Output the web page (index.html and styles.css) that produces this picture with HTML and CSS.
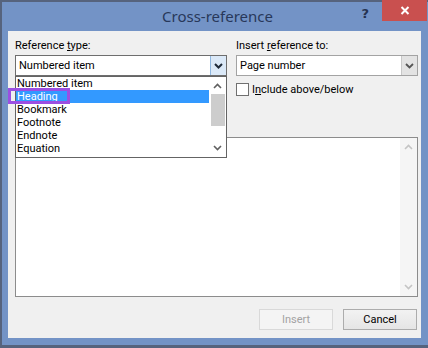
FILE: index.html
```html
<!DOCTYPE html>
<html lang="en">
<head>
    <meta charset="utf-8" />
    <title>Cross-reference</title>
    <link rel="stylesheet" href="styles.css">
</head>
<body>
    <div class="window">
        <div class="titlebar">
            <span class="title">Cross-reference</span>
            <div class="controls">
                <span class="help">?</span>
                <span class="close">
                    <svg width="10" height="9" viewBox="0 0 10 9"><path d="M1.5 1 L8.5 8 M8.5 1 L1.5 8" stroke="#fff" stroke-width="2" /></svg>
                </span>
            </div>
        </div>
        <div class="client">
            <div class="top-row">
                <div class="col-left">
                    <div class="label">Reference <u>t</u>ype:</div>
                    <div class="combo focused">
                        <span class="combo-text">Numbered item</span>
                        <span class="combo-arrow">
                            <svg width="9" height="6" viewBox="0 0 9 6"><polyline points="1,1 4.5,4.5 8,1" fill="none" stroke="#1e2a3a" stroke-width="2" /></svg>
                        </span>
                        <div class="dropdown">
                            <ul class="items">
                                <li>Numbered item</li>
                                <li class="selected">Heading</li>
                                <li>Bookmark</li>
                                <li>Footnote</li>
                                <li>Endnote</li>
                                <li>Equation</li>
                            </ul>
                            <div class="scrollbar">
                                <svg width="9" height="6" viewBox="0 0 9 6"><polyline points="1,5 4.5,1.5 8,5" fill="none" stroke="#606060" stroke-width="1.6" /></svg>
                                <div class="thumb"></div>
                                <svg class="down" width="9" height="6" viewBox="0 0 9 6"><polyline points="1,1 4.5,4.5 8,1" fill="none" stroke="#606060" stroke-width="1.6" /></svg>
                            </div>
                            <div class="marker"></div>
                        </div>
                    </div>
                </div>
                <div class="col-right">
                    <div class="label">Insert <u>r</u>eference to:</div>
                    <div class="combo">
                        <span class="combo-text">Page number</span>
                        <span class="combo-arrow plain">
                            <svg width="9" height="6" viewBox="0 0 9 6"><polyline points="1,1 4.5,4.5 8,1" fill="none" stroke="#555" stroke-width="1.8" /></svg>
                        </span>
                    </div>
                    <div class="check">
                        <span class="box"></span>
                        <span>I<u>n</u>clude above/below</span>
                    </div>
                </div>
            </div>
            <div class="list-box">
                <div class="list-area"></div>
                <div class="list-scroll">
                    <svg width="9" height="6" viewBox="0 0 9 6"><polyline points="1,5 4.5,1.5 8,5" fill="none" stroke="#c4c4c4" stroke-width="1.6" /></svg>
                    <svg width="9" height="6" viewBox="0 0 9 6"><polyline points="1,1 4.5,4.5 8,1" fill="none" stroke="#c4c4c4" stroke-width="1.6" /></svg>
                </div>
            </div>
            <div class="buttons">
                <button class="btn" disabled>Insert</button>
                <button class="btn cancel">Cancel</button>
            </div>
        </div>
    </div>
</body>
</html>
```

FILE: styles.css
```css
body {
    margin: 0;
    background-color: #56637d;
    font-family: Roboto, "Noto Sans", sans-serif;
    font-size: 11px;
    color: #000;
}
.window {
    margin: 2px 0 0 2px;
    height: 343px;
    box-sizing: border-box;
    padding: 0 7px 7px 6px;
    background-color: #7393c6;
    display: flex;
    flex-direction: column;
}
.titlebar {
    height: 29px;
    display: grid;
    grid-template-columns: 1fr auto 1fr;
    align-items: center;
}
.title {
    grid-column: 2;
    font-family: "Noto Sans", sans-serif;
    font-size: 15px;
    color: #28385a;
    margin: 0 0 2px 6px;
}
.controls {
    grid-column: 3;
    justify-self: end;
    align-self: start;
    display: flex;
    margin: -2px -6px 0 0;
}
.help {
    font-family: "DejaVu Sans", sans-serif;
    font-weight: bold;
    font-size: 13px;
    color: #253250;
    margin: 6px 13px 0 0;
}
.close {
    width: 45px;
    height: 21px;
    background-color: #c9504f;
    display: flex;
    align-items: center;
    justify-content: center;
}
.client {
    flex: 1;
    background-color: #f0f0f0;
    padding: 7px 3px 8px 7px;
}
.top-row {
    display: flex;
    gap: 9px;
}
.col-left {
    width: 212px;
}
.col-right {
    flex: 1;
}
.label {
    height: 15px;
    line-height: 15px;
    margin-bottom: 2px;
}
.combo {
    position: relative;
    height: 21px;
    box-sizing: border-box;
    border: 1px solid #a3a3a3;
    background-color: #fff;
    display: flex;
    align-items: center;
}
.combo.focused {
    border-color: #6e6e6e;
}
.combo-text {
    flex: 1;
    padding-left: 3px;
}
.combo-arrow {
    width: 16px;
    height: 19px;
    box-sizing: border-box;
    display: flex;
    align-items: center;
    justify-content: center;
    background-color: #dbe9f8;
    border-left: 1px solid #8fb7e0;
}
.combo-arrow.plain {
    background-color: #e3e3e3;
    border-left: 1px solid #c8c8c8;
}
.dropdown {
    position: absolute;
    top: 20px;
    left: -1px;
    width: 212px;
    height: 82px;
    box-sizing: border-box;
    border: 1px solid #646464;
    background-color: #fff;
    display: flex;
}
.items {
    list-style: none;
    margin: 0;
    padding: 0;
    width: 193px;
}
.items li {
    height: 13px;
    line-height: 13px;
    padding-left: 1px;
}
.items li.selected {
    background-color: #3399ff;
    color: #fff;
}
.scrollbar {
    width: 17px;
    display: flex;
    flex-direction: column;
    align-items: center;
    padding-top: 6px;
    box-sizing: border-box;
}
.thumb {
    width: 14px;
    height: 32px;
    margin-top: 5px;
    background-color: #cdcdcd;
}
.scrollbar .down {
    margin-top: auto;
    margin-bottom: 6px;
}
.marker {
    position: absolute;
    left: -8px;
    top: 11px;
    width: 62px;
    height: 16px;
    box-sizing: border-box;
    border: 3px solid #9b4fe2;
}
.check {
    display: flex;
    align-items: center;
    gap: 3px;
    margin-top: 7px;
    height: 13px;
}
.box {
    width: 13px;
    height: 13px;
    box-sizing: border-box;
    border: 1px solid #707070;
    background-color: #fff;
}
.list-box {
    margin-top: 41px;
    height: 160px;
    box-sizing: border-box;
    border: 1px solid #8c8c8c;
    background-color: #fff;
    display: flex;
}
.list-area {
    flex: 1;
}
.list-scroll {
    width: 17px;
    background-color: #f5f5f5;
    display: flex;
    flex-direction: column;
    justify-content: space-between;
    align-items: center;
    padding: 6px 0;
}
.buttons {
    display: flex;
    justify-content: flex-end;
    gap: 10px;
    margin-top: 12px;
    margin-right: 1px;
}
.btn {
    width: 74px;
    height: 21px;
    font-family: inherit;
    font-size: 11px;
    border: 1px solid #acacac;
    background: linear-gradient(#f2f2f2, #e5e5e5);
    color: #000;
    padding: 0;
}
.btn:disabled {
    border-color: #d9d9d9;
    background: #f4f4f4;
    color: #a3a3a3;
}
```
